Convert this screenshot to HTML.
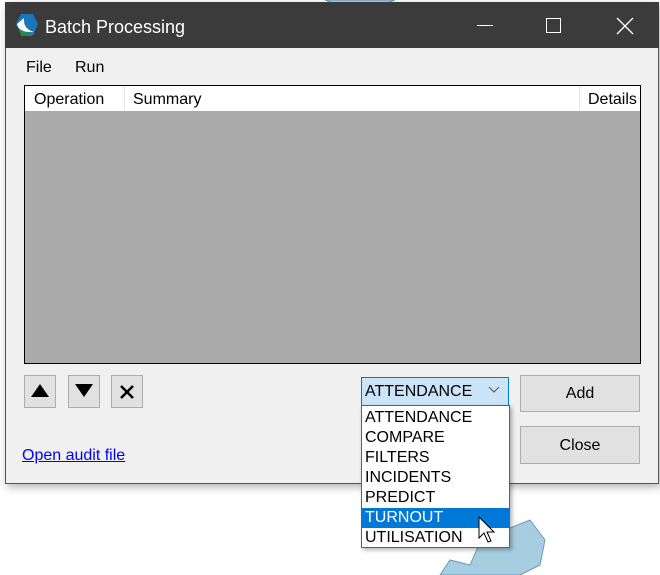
<!DOCTYPE html>
<html><head><style>
*{margin:0;padding:0;box-sizing:border-box}
body{width:660px;height:575px;background:#fff;position:relative;overflow:hidden;font-family:"Liberation Sans",sans-serif;font-size:16px;color:#000}
.a{position:absolute}
.btn{position:absolute;background:#e1e1e1;border:1px solid #adadad;text-align:center}
.it{height:20px;line-height:20px;padding-left:3px}
</style></head><body>
<svg class="a" style="left:0;top:0" width="660" height="575">
<polygon points="325,0 345,8 380,5 395,0" fill="#a7cde0" stroke="#6a9cb8"/>
<polygon points="440,575 450,560 470,565 490,520 510,528 530,520 545,540 540,565 520,575" fill="#a7cde0" stroke="#6a9cb8"/>
</svg>
<div class="a" style="left:5px;top:2px;width:654px;height:482px;background:#f0f0f0;border:1px solid #555;box-shadow:2px 3px 8px rgba(0,0,0,.3)"></div>
<div class="a" style="left:5px;top:2px;width:654px;height:46px;background:#3b3b3b"></div>
<svg class="a" style="left:15px;top:13px" width="24" height="24"><polygon points="6,1 18,1 23,11 18,22 6,22 1,11" fill="#1a75bb"/><path d="M3,12 Q6,22 20,20 L17,23 L6,23 Z" fill="#2a8a3e"/><path d="M2,11 Q4,20 19,19 Q8,16 9,5 Z" fill="#fff"/></svg>
<div class="a" style="left:45px;top:17px;color:#fff;font-size:18px">Batch Processing</div>
<div class="a" style="left:477px;top:25px;width:16px;height:1px;background:#fff"></div>
<div class="a" style="left:546px;top:18px;width:15px;height:15px;border:1px solid #fff"></div>
<svg class="a" style="left:616px;top:17px" width="18" height="18"><path d="M1,1L17,17M17,1L1,17" stroke="#fff" stroke-width="1.3"/></svg>
<div class="a" style="left:26px;top:59px">File</div>
<div class="a" style="left:75px;top:59px">Run</div>
<div class="a" style="left:24px;top:85px;width:617px;height:279px;background:#ababab;border:1px solid #000"></div>
<div class="a" style="left:25px;top:86px;width:615px;height:25px;background:#fff"></div>
<div class="a" style="left:124px;top:86px;width:1px;height:25px;background:#e5e5e5"></div>
<div class="a" style="left:579px;top:86px;width:1px;height:25px;background:#e5e5e5"></div>
<div class="a" style="left:34px;top:91px">Operation</div>
<div class="a" style="left:133px;top:91px">Summary</div>
<div class="a" style="left:588px;top:91px">Details</div>
<div class="btn" style="left:24px;top:375px;width:32px;height:33px"></div>
<svg class="a" style="left:31px;top:384px" width="18" height="14"><polygon points="9,0 18,13 0,13"/></svg>
<div class="btn" style="left:68px;top:375px;width:32px;height:33px"></div>
<svg class="a" style="left:75px;top:384px" width="18" height="14"><polygon points="0,0 18,0 9,13"/></svg>
<div class="btn" style="left:111px;top:375px;width:32px;height:33px"></div>
<svg class="a" style="left:119px;top:384px" width="16" height="16"><path d="M2,2L14,14M14,2L2,14" stroke="#000" stroke-width="2.5"/></svg>
<div class="a" style="left:22px;top:447px;color:#00f;text-decoration:underline">Open audit file</div>
<div class="btn" style="left:520px;top:375px;width:120px;height:37px;line-height:36px">Add</div>
<div class="btn" style="left:520px;top:426px;width:120px;height:38px;line-height:37px">Close</div>
<div class="a" style="left:361px;top:377px;width:148px;height:29px;background:#cce4f7;border:1px solid #0078d7"></div>
<div class="a" style="left:365px;top:383px">ATTENDANCE</div>
<svg class="a" style="left:488px;top:386px" width="12" height="8"><path d="M1,1L6,6L11,1" fill="none" stroke="#555"/></svg>
<div class="a" style="left:361px;top:405px;width:149px;height:143px;background:#fff;border:1px solid #0078d7;box-shadow:2px 2px 4px rgba(0,0,0,.3);padding-top:2px">
<div class="it">ATTENDANCE</div><div class="it">COMPARE</div><div class="it">FILTERS</div><div class="it">INCIDENTS</div><div class="it">PREDICT</div><div class="it" style="background:#0078d7;color:#fff">TURNOUT</div><div class="it">UTILISATION</div>
</div>
<svg class="a" style="left:478px;top:516px" width="20" height="28"><path d="M1,1L1,22L6,17L10,26L13,25L9,16L16,16Z" fill="#fff" stroke="#000"/></svg>
</body></html>
